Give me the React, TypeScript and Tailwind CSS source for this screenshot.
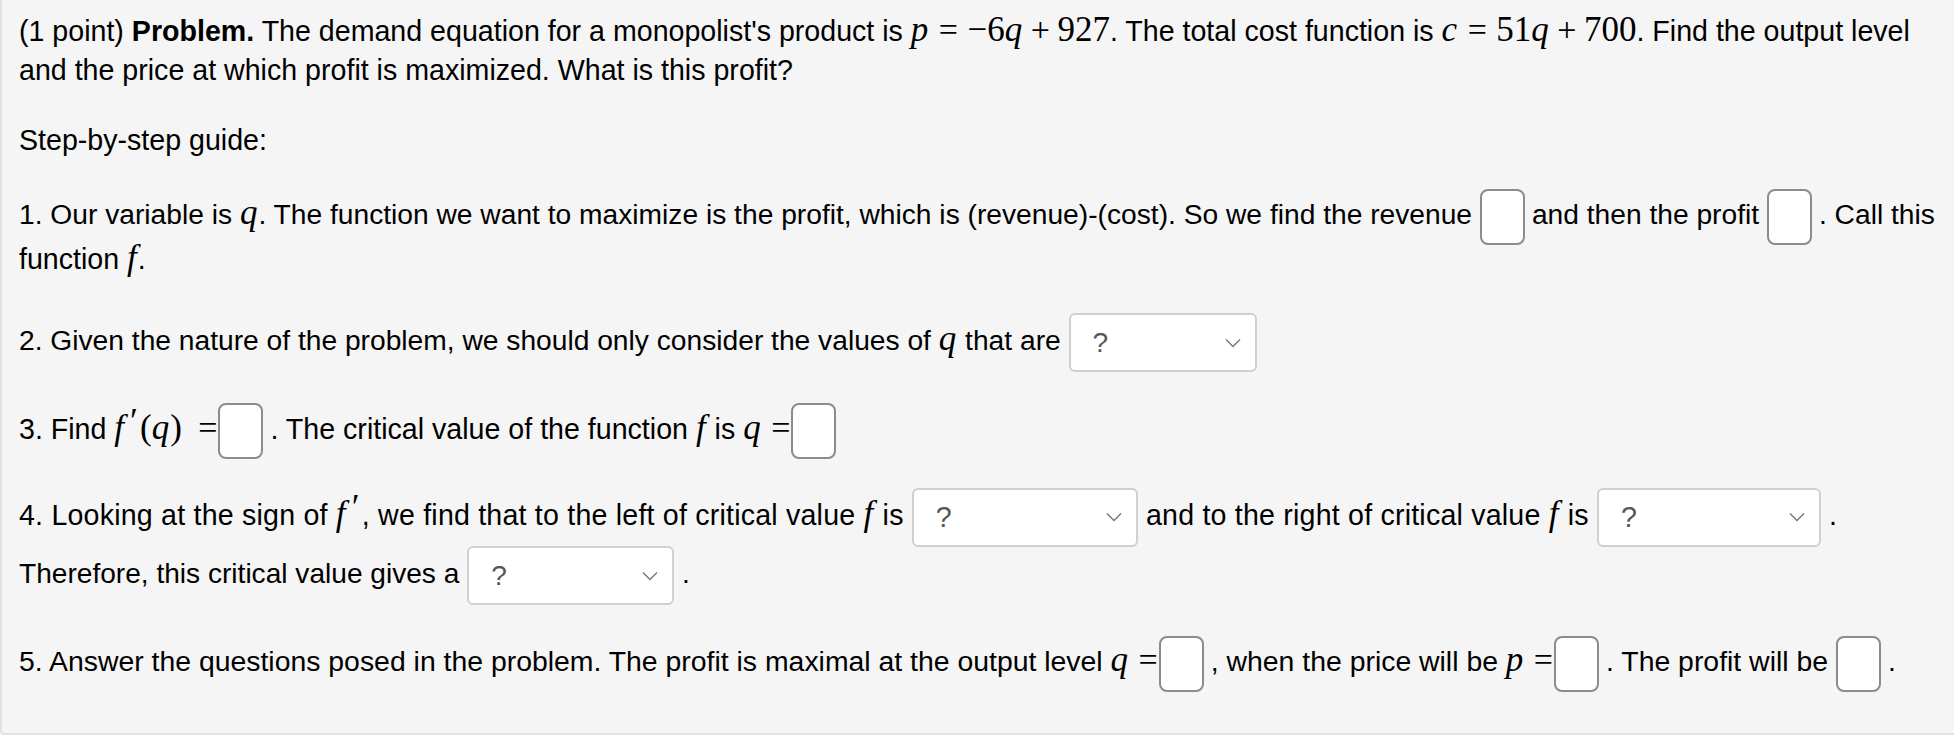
import React from "react";

const V: React.FC<{ children: React.ReactNode }> = ({ children }) => (
  <span className="font-['Liberation_Serif',serif] italic text-[35px] pr-[1px]">{children}</span>
);

const N: React.FC<{ children: React.ReactNode }> = ({ children }) => (
  <span className="font-['Liberation_Serif',serif] text-[35px]">{children}</span>
);

const Rel: React.FC<{ children: React.ReactNode; tight?: boolean }> = ({ children, tight }) => (
  <span className={"font-['Liberation_Serif',serif] text-[34px] ml-[0.28em] " + (tight ? "mr-[1px]" : "mr-[0.28em]")}>
    {children}
  </span>
);

const Op: React.FC<{ children: React.ReactNode }> = ({ children }) => (
  <span className="font-['Liberation_Serif',serif] text-[34px] mx-[0.22em]">{children}</span>
);

const Blank: React.FC = () => (
  <span className="inline-block align-middle w-[45px] h-[56px] mr-[7px] rounded-[8px] border-2 border-[#8c8c8c] bg-white" />
);

const Pick: React.FC<{ width: string }> = ({ width }) => (
  <span
    className={
      "inline-flex align-middle h-[59px] items-center justify-between pl-[22px] pr-[14px] rounded-[6px] border-2 border-[#d0d0d0] bg-white text-[#555] leading-none " +
      width
    }
  >
    <span>?</span>
    <svg width="16" height="10" viewBox="0 0 16 10" fill="none">
      <path d="M1 1.5 L8 8.5 L15 1.5" stroke="#777" strokeWidth="1.4" />
    </svg>
  </span>
);

const Prime: React.FC = () => (
  <span className="font-['Liberation_Serif',serif] text-[36px] relative -top-[6px] ml-[5px] mr-[2px]">′</span>
);

export default function App() {
  return (
    <div className="w-full h-[736px] bg-white">
      <div className="h-[735px] bg-[#f5f5f5] border-l-2 border-b-2 border-[#e2e2e2] rounded-bl-[4px] pl-[17px] pt-[10px] text-[28.6px] text-black font-['Liberation_Sans',Arial,sans-serif] whitespace-nowrap overflow-hidden">
        <div className="h-[40px] leading-[40px]">
          (1 point) <b>Problem.</b> The demand equation for a monopolist's product is <V>p</V>
          <Rel>=</Rel>
          <N>−6</N>
          <V>q</V>
          <Op>+</Op>
          <N>927</N>. The total cost function is <V>c</V>
          <Rel>=</Rel>
          <N>51</N>
          <V>q</V>
          <Op>+</Op>
          <N>700</N>. Find the output level
        </div>
        <div className="h-[40px] leading-[40px]">and the price at which profit is maximized. What is this profit?</div>

        <div className="h-[40px] leading-[40px] mt-[30px]">Step-by-step guide:</div>

        <div className="h-[60px] leading-[60px] mt-[23px] text-[28.2px]">
          1. Our variable is <V>q</V>. The function we want to maximize is the profit, which is (revenue)-(cost). So we find
          the revenue <Blank />
          and then the profit <Blank />. Call this
        </div>
        <div className="h-[30px] leading-[30px]">
          function <V>f</V>.
        </div>

        <div className="h-[60px] leading-[60px] mt-[36px] text-[28.2px]">
          2. Given the nature of the problem, we should only consider the values of <V>q</V> that are{" "}
          <Pick width="w-[188px]" />
        </div>

        <div className="h-[60px] leading-[60px] mt-[28px]">
          3. Find <V>f</V>
          <Prime />
          <N>(</N>
          <V>q</V>
          <N>)</N>
          <span className="ml-[7px]" />
          <Rel tight>=</Rel>
          <Blank />. The critical value of the function <V>f</V> is <V>q</V>
          <Rel tight>=</Rel>
          <Blank />
        </div>

        <div className="h-[60px] leading-[60px] mt-[26px] tracking-[0.2px]">
          4. Looking at the sign of <V>f</V>
          <Prime />, we find that to the left of critical value <V>f</V> is <Pick width="w-[226px]" /> and to the right of
          critical value <V>f</V> is <Pick width="w-[224px]" /> .
        </div>
        <div className="h-[60px] leading-[60px] mt-[1px] text-[28.1px]">
          Therefore, this critical value gives a <Pick width="w-[207px]" /> .
        </div>

        <div className="h-[60px] leading-[60px] mt-[26px] text-[28.4px]">
          5. Answer the questions posed in the problem. The profit is maximal at the output level <V>q</V>
          <Rel tight>=</Rel>
          <Blank />, when the price will be <V>p</V>
          <Rel tight>=</Rel>
          <Blank />. The profit will be <Blank />.
        </div>
      </div>
    </div>
  );
}
